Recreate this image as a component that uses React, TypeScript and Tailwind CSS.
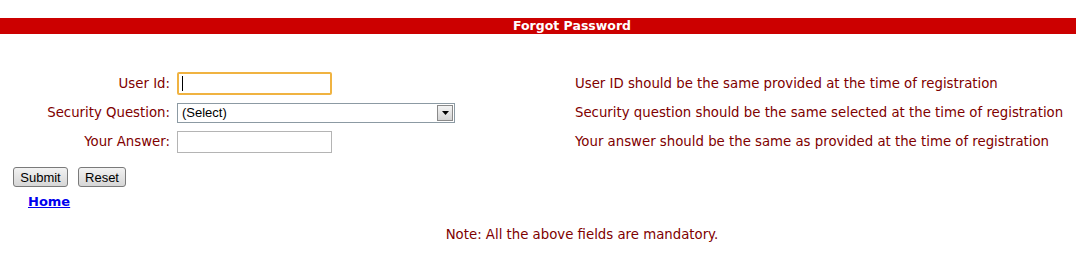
import React from 'react';

const rows = [
  { label: 'User Id:', help: 'User ID should be the same provided at the time of registration', kind: 'focus' },
  { label: 'Security Question:', help: 'Security question should be the same selected at the time of registration', kind: 'select' },
  { label: 'Your Answer:', help: 'Your answer should be the same as provided at the time of registration', kind: 'text' },
];

const Field: React.FC<{ kind: string }> = ({ kind }) => {
  if (kind === 'select') {
    return (
      <div className="flex h-[20px] w-[278px] items-center border border-[#8c9aa3] bg-white">
        <span className="flex-1 pl-[4px] text-[13px] leading-none text-black [font-family:'Liberation_Sans',Arial,sans-serif]">
          (Select)
        </span>
        <span className="m-px flex h-[16px] w-[16px] items-center justify-center border border-[#8a8a8a] bg-gradient-to-b from-[#f4f4f4] to-[#d4d4d4]">
          <svg width="7" height="4" viewBox="0 0 7 4">
            <path d="M0 0h7L3.5 4z" fill="#000" />
          </svg>
        </span>
      </div>
    );
  }
  if (kind === 'focus') {
    return (
      <div className="flex h-[23px] w-[155px] items-center rounded-[2px] border-2 border-[#f0b341] bg-white pl-[3px]">
        <span className="h-[15px] w-px bg-black" />
      </div>
    );
  }
  return <div className="h-[22px] w-[155px] border border-[#b4b4b4] bg-white" />;
};

const App: React.FC = () => {
  return (
    <div className="h-[259px] w-[1076px] overflow-hidden bg-white text-[13.3px] text-[#800000] [font-family:'DejaVu_Sans',Verdana,sans-serif]">
      <div className="h-[18px]" />
      <div className="flex h-[16px] items-center justify-center bg-[#cc0000] pl-[68px] text-[12.5px] font-bold text-white">
        Forgot Password
      </div>
      <div className="h-[35px]" />
      <div className="grid grid-cols-[177px_398px_1fr]">
        {rows.map(r => (
          <React.Fragment key={r.label}>
            <div className="flex h-[29px] items-center justify-end whitespace-nowrap pr-[7px]">{r.label}</div>
            <div className="flex h-[29px] items-center">
              <Field kind={r.kind} />
            </div>
            <div className="flex h-[29px] items-center whitespace-nowrap">{r.help}</div>
          </React.Fragment>
        ))}
      </div>
      <div className="mt-[11px] flex gap-[10px] pl-[13px] [font-family:'Liberation_Sans',Arial,sans-serif] text-[13px] text-black">
        <button className="h-[20px] w-[55px] rounded-[3px] border border-[#7a7a7a] bg-gradient-to-b from-[#f2f2f2] to-[#d6d6d6] leading-none">
          Submit
        </button>
        <button className="h-[20px] w-[48px] rounded-[3px] border border-[#7a7a7a] bg-gradient-to-b from-[#f2f2f2] to-[#d6d6d6] leading-none">
          Reset
        </button>
      </div>
      <div className="mt-[5px] pl-[28px] leading-[20px]">
        <a href="#" className="text-[13px] font-bold text-[#0000ee] underline">
          Home
        </a>
      </div>
      <div className="mt-[13px] pl-[88px] text-center">Note: All the above fields are mandatory.</div>
    </div>
  );
};

export default App;
